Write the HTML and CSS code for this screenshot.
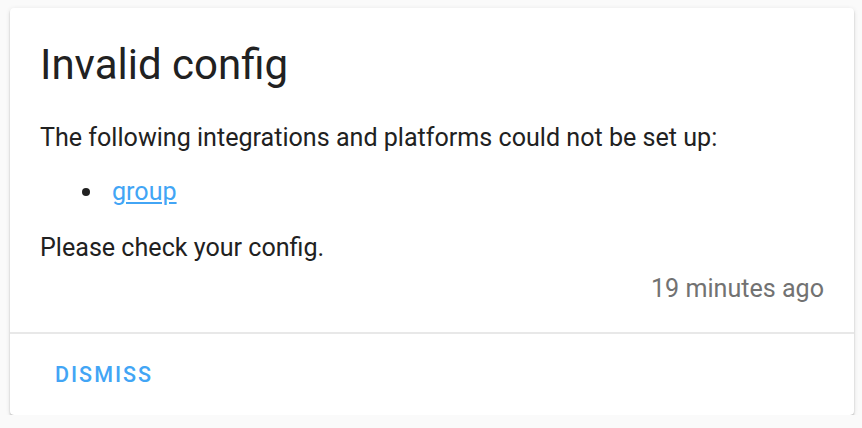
FILE: index.html
```html
<!DOCTYPE html>
<html lang="en">
<head>
    <meta charset="UTF-8">
    <meta name="viewport" content="width=device-width, initial-scale=1.0">
    <title>Notification</title>
    <link rel="stylesheet" href="styles.css">
</head>
<body>
    <div class="card">
        <div class="card-content">
            <h1 class="card-title">Invalid config</h1>
            <div class="message">
                <p>The following integrations and platforms could not be set up:</p>
                <ul>
                    <li><a href="#">group</a></li>
                </ul>
                <p>Please check your config.</p>
            </div>
            <div class="time">19 minutes ago</div>
        </div>
        <div class="card-actions">
            <button class="dismiss-btn">Dismiss</button>
        </div>
    </div>
</body>
</html>
```

FILE: styles.css
```css
body {
    margin: 0;
    padding: 8px 8px 0 10px;
    background-color: #fafafa;
    font-family: Roboto, "Liberation Sans", sans-serif;
    color: #212121;
}

.card {
    width: 844px;
    height: 407px;
    background-color: white;
    border-radius: 4px;
    box-shadow: 0 2px 2px rgba(0,0,0,0.2), 0 1px 5px rgba(0,0,0,0.1), 0 3px 1px -2px rgba(0,0,0,0.25);
    display: flex;
    flex-direction: column;
}

.card-content {
    padding: 33px 30px 0 30px;
    border-bottom: 2px solid #e8e8e8;
    height: 326px;
    box-sizing: border-box;
}

.card-title {
    margin: 0;
    font-size: 42px;
    font-weight: 400;
    line-height: 48px;
}

.message {
    font-size: 25.1px;
    line-height: 36px;
}

.message p {
    margin: 0;
}

.message p:first-child {
    margin-top: 31px;
}

.message ul {
    margin: 18px 0 20px 0;
    padding-left: 42px;
    list-style: none;
}

.message li {
    display: flex;
    align-items: center;
}

.message li::before {
    content: "";
    width: 8px;
    height: 8px;
    border-radius: 50%;
    background-color: #212121;
    margin-right: 22px;
}

.message a {
    color: #42a5f5;
}

.time {
    font-size: 25.1px;
    line-height: 36px;
    color: #727272;
    text-align: right;
    margin-top: 5px;
}

.card-actions {
    flex: 1;
    display: flex;
    align-items: center;
    padding: 0 0 0 33px;
}

.dismiss-btn {
    background: none;
    border: none;
    padding: 8px 12px;
    font-family: inherit;
    font-size: 21.5px;
    font-weight: 500;
    letter-spacing: 2px;
    text-transform: uppercase;
    color: #42a5f5;
    cursor: pointer;
}
```
